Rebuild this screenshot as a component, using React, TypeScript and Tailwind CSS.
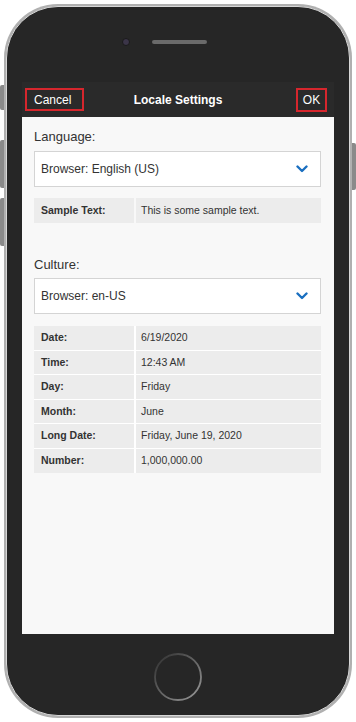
import React from "react";

const rows: [string, string][] = [
  ["Date:", "6/19/2020"],
  ["Time:", "12:43 AM"],
  ["Day:", "Friday"],
  ["Month:", "June"],
  ["Long Date:", "Friday, June 19, 2020"],
  ["Number:", "1,000,000.00"],
];

function Chevron() {
  return (
    <svg width="12" height="8" viewBox="0 0 12 8" className="shrink-0">
      <path d="M1.5 1.5 L6 6 L10.5 1.5" fill="none" stroke="#1a6fc0" strokeWidth="2.4" strokeLinecap="round" strokeLinejoin="round" />
    </svg>
  );
}

function Select({ text }: { text: string }) {
  return (
    <div className="h-[36px] bg-white border border-[#d4d4d4] flex items-center justify-between pl-[6px] pr-[12px] text-[12px] text-[#333]">
      <span>{text}</span>
      <Chevron />
    </div>
  );
}

export default function App() {
  return (
    <div
      className="w-[356px] h-[722px] bg-white pt-[4px] pl-[4px] relative overflow-hidden"
      style={{ fontFamily: '"Liberation Sans", Arial, sans-serif' }}
    >
      {/* side buttons */}
      <div className="absolute left-0 top-[85px] w-[4px] h-[25px] bg-[#8a8a8a] rounded-l-[2px]" />
      <div className="absolute left-0 top-[140px] w-[4px] h-[48px] bg-[#8a8a8a] rounded-l-[2px]" />
      <div className="absolute left-0 top-[198px] w-[4px] h-[48px] bg-[#8a8a8a] rounded-l-[2px]" />
      <div className="absolute right-0 top-[143px] w-[4px] h-[47px] bg-[#8a8a8a] rounded-r-[2px]" />

      <div className="w-[348px] h-[714px] rounded-[54px] bg-[#b0b0b0] p-[2px]">
        <div className="w-full h-full rounded-[52px] bg-[#262626] border border-[#d8d8d8] flex flex-col items-center">
          {/* top hardware */}
          <div className="h-[75px] w-full flex items-center pl-[115px] pb-[6px]">
            <div className="w-[8px] h-[8px] rounded-full bg-[#3b3548] border border-[#1a1a1a]" />
            <div className="ml-[22px] w-[55px] h-[4px] rounded-[2px] bg-[#6a6a6a]" />
          </div>

          {/* screen */}
          <div className="w-[312px] h-[552px] bg-[#f8f8f8] flex flex-col">
            <div className="h-[35px] bg-[#2a2a2a] grid grid-cols-[1fr_auto_1fr] items-center px-[3px] text-white">
              <div className="justify-self-start h-[23px] w-[59px] border-2 border-[#d6262d] flex items-center pl-[7px] text-[12px]">
                Cancel
              </div>
              <div className="text-[12px] font-bold">Locale Settings</div>
              <div className="justify-self-end h-[24px] w-[31px] border-2 border-[#d6262d] flex items-center justify-center text-[12px] mr-[4px]">
                OK
              </div>
            </div>

            <div className="pl-[12px] pr-[13px] text-[#333]">
              <div className="mt-[12px] text-[13px] leading-[15px] text-[#333]">Language:</div>
              <div className="mt-[7px]">
                <Select text="Browser: English (US)" />
              </div>
              <div className="mt-[11px] flex h-[25px] text-[10.5px]">
                <div className="w-[100px] bg-[#ececec] flex items-center pl-[7px] font-bold">Sample Text:</div>
                <div className="flex-1 ml-[2px] bg-[#ececec] flex items-center pl-[5px]">This is some sample text.</div>
              </div>

              <div className="mt-[34px] text-[13px] leading-[15px]">Culture:</div>
              <div className="mt-[6px]">
                <Select text="Browser: en-US" />
              </div>
              <div className="mt-[12px] flex flex-col gap-[1px] bg-white">
                {rows.map(([k, v]) => (
                  <div key={k} className="flex h-[23.6px] text-[10.5px]">
                    <div className="w-[100px] bg-[#ececec] flex items-center pl-[7px] font-bold">{k}</div>
                    <div className="flex-1 ml-[2px] bg-[#ececec] flex items-center pl-[5px]">{v}</div>
                  </div>
                ))}
              </div>
            </div>
          </div>

          {/* home button */}
          <div className="mt-[18px]">
            <svg width="50" height="50" viewBox="0 0 50 50">
              <defs>
                <linearGradient id="hb" x1="0" y1="0" x2="1" y2="1">
                  <stop offset="0" stopColor="#2e2e2e" />
                  <stop offset="1" stopColor="#9a9a9a" />
                </linearGradient>
              </defs>
              <circle cx="25" cy="25" r="23" fill="none" stroke="url(#hb)" strokeWidth="1.8" />
            </svg>
          </div>
        </div>
      </div>
    </div>
  );
}
